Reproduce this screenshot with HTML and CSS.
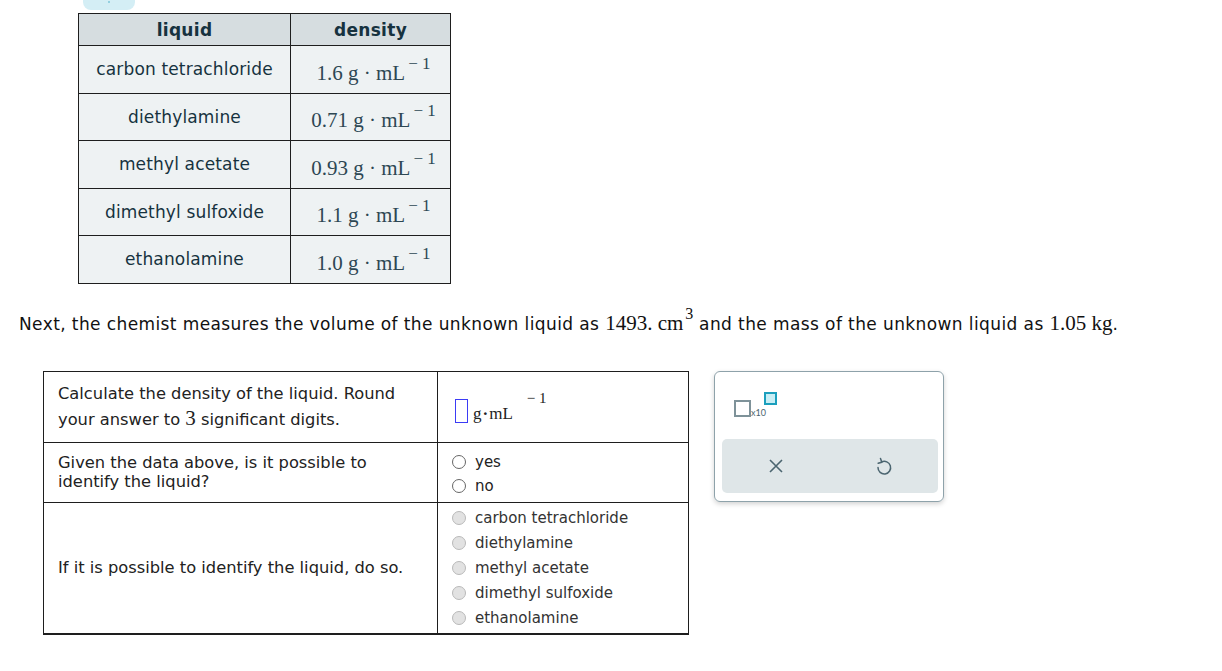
FILE: index.html
```html
<!DOCTYPE html>
<html>
<head>
<meta charset="utf-8">
<link rel="stylesheet" href="styles.css">
</head>
<body>
<div class="tab"><span class="tab-dot"></span></div>
<table class="data">
  <tr><th class="c1">liquid</th><th class="c2">density</th></tr>
  <tr><td>carbon tetrachloride</td><td class="m">1.6 g <span class="dot">·</span> mL<sup>− 1</sup></td></tr>
  <tr><td>diethylamine</td><td class="m">0.71 g <span class="dot">·</span> mL<sup>− 1</sup></td></tr>
  <tr><td>methyl acetate</td><td class="m">0.93 g <span class="dot">·</span> mL<sup>− 1</sup></td></tr>
  <tr><td>dimethyl sulfoxide</td><td class="m">1.1 g <span class="dot">·</span> mL<sup>− 1</sup></td></tr>
  <tr><td>ethanolamine</td><td class="m">1.0 g <span class="dot">·</span> mL<sup>− 1</sup></td></tr>
</table>
<p class="next">Next, the chemist measures the volume of the unknown liquid as <span class="math">1493. cm<sup>3</sup></span> and the mass of the unknown liquid as <span class="math">1.05 kg</span>.</p>
<div class="qrow">
  <table class="q">
    <tr class="r1">
      <td class="qt">Calculate the density of the liquid. Round your answer to <span class="num">3</span> significant digits.</td>
      <td class="qa"><span class="ans"><span class="box"></span><span class="unit">g<span class="udot">·</span>mL</span><sup class="usup">− 1</sup></span></td>
    </tr>
    <tr class="r2">
      <td class="qt">Given the data above, is it possible to identify the liquid?</td>
      <td class="qa">
        <div class="opt"><span class="radio"></span>yes</div>
        <div class="opt"><span class="radio"></span>no</div>
      </td>
    </tr>
    <tr class="r3">
      <td class="qt">If it is possible to identify the liquid, do so.</td>
      <td class="qa">
        <div class="opt2"><span class="radio dis"></span>carbon tetrachloride</div>
        <div class="opt2"><span class="radio dis"></span>diethylamine</div>
        <div class="opt2"><span class="radio dis"></span>methyl acetate</div>
        <div class="opt2"><span class="radio dis"></span>dimethyl sulfoxide</div>
        <div class="opt2"><span class="radio dis"></span>ethanolamine</div>
      </td>
    </tr>
  </table>
  <div class="panel">
    <div class="tools">
      <span class="sci"><span class="sq"></span><span class="x10">x10</span><span class="sq2"></span></span>
    </div>
    <div class="bar">
      <span class="cell"><svg width="16" height="16" viewBox="0 0 16 16"><path d="M2 2L14 14M14 2L2 14" stroke="#4b6570" stroke-width="1.6" fill="none"/></svg></span>
      <span class="cell"><svg width="18" height="20" viewBox="0 0 18 20"><path d="M6.5 6A6.3 6.3 0 1 1 3 11.5" stroke="#4b6570" stroke-width="1.5" fill="none" stroke-linecap="round"/><path d="M5.5 2.5L6.8 6.2L3.2 7.3" stroke="#4b6570" stroke-width="1.5" fill="none" stroke-linecap="round" stroke-linejoin="round"/></svg></span>
    </div>
  </div>
</div>
</body>
</html>
```

FILE: styles.css
```css
html, body {
  margin: 0;
  padding: 0;
  background: #fff;
}
body {
  font-family: "DejaVu Sans", Verdana, sans-serif;
  color: #222;
}
.tab {
  margin-left: 83px;
  width: 52px;
  height: 10px;
  background: #d4eef5;
  border-radius: 0 0 8px 8px;
  position: relative;
}
.tab-dot {
  position: absolute;
  left: 25px;
  top: 1px;
  width: 2px;
  height: 2px;
  background: #7fc6d8;
  border-radius: 50%;
}
.data {
  margin: 3px 0 0 78px;
  border-collapse: collapse;
  border: 1.5px solid #1e1e1e;
}
.data th, .data td {
  border: 1px solid #1e1e1e;
  text-align: center;
  padding: 0;
}
.data th {
  background: #d6dde0;
  color: #16323f;
  font-size: 17px;
  letter-spacing: 0.3px;
  font-weight: bold;
  height: 31px;
}
.data .c1 { width: 211px; }
.data .c2 { width: 159px; }
.data td {
  background: #eef2f3;
  color: #16323f;
  font-size: 17px;
  letter-spacing: 0.15px;
  height: 46.5px;
}
.data td.m {
  font-family: "Liberation Serif", "Times New Roman", serif;
  font-size: 21px;
  letter-spacing: 0;
  color: #2d4753;
  padding: 4px 0 0 6px;
  height: 42.5px;
}
.data td.m sup {
  font-size: 17px;
  position: relative;
  top: -3px;
  margin-left: 3px;
}
.next {
  margin: 24px 0 0 19px;
  font-size: 17px;
  letter-spacing: 0.4px;
  color: #111;
}
.math {
  font-family: "Liberation Serif", "Times New Roman", serif;
  font-size: 21px;
  letter-spacing: 0;
}
.math sup {
  font-size: 16px;
  margin-left: 2px;
  position: relative;
  top: -3px;
}
.qrow {
  display: flex;
  align-items: flex-start;
  margin: 35px 0 0 43px;
}
.q {
  border-collapse: collapse;
  table-layout: fixed;
  border: 1px solid #1e1e1e;
  border-bottom: 2px solid #1e1e1e;
  width: 645px;
}
.q td {
  border: 1px solid #1e1e1e;
  vertical-align: middle;
  padding: 0;
  box-sizing: border-box;
}
.q td.qt {
  width: 394px;
  padding: 0 22px 0 14px;
  font-size: 16.3px;
  color: #222;
}
.q td.qa {
  width: 251px;
  padding-left: 14px;
}
.r1 td { height: 71px; }
.r1 .qt { line-height: 26px; }
.r2 td { height: 60px; }
.r2 .qt { line-height: 19px; }
.r3 td { height: 132px; }
.num {
  font-family: "Liberation Serif", "Times New Roman", serif;
  font-size: 21px;
  line-height: 1;
}
.ans {
  display: flex;
  align-items: flex-end;
  margin-top: 10px;
}
.box {
  width: 11px;
  height: 22px;
  border: 1.5px solid #3b3bf5;
  margin-left: 3px;
  margin-bottom: 1px;
}
.unit {
  font-family: "Liberation Serif", "Times New Roman", serif;
  font-size: 17px;
  margin-left: 5px;
  color: #222;
  margin-bottom: 0;
}
.udot { margin: 0 1px; font-weight: bold; }
.usup {
  font-family: "Liberation Serif", "Times New Roman", serif;
  font-size: 15px;
  margin-left: 14px;
  align-self: flex-start;
  position: relative;
  top: -9px;
}
.opt, .opt2 {
  display: flex;
  align-items: center;
  font-size: 15px;
  color: #222;
}
.opt { height: 24px; }
.r2 .qa { padding-top: 3px; }
.opt2 { height: 25px; color: #333; }
.radio {
  width: 12px;
  height: 12px;
  border: 1.3px solid #666;
  border-radius: 50%;
  margin-right: 9px;
  flex: none;
}
.radio.dis {
  background: #e2e2e2;
  border-color: #b9b9b9;
}
.panel {
  margin-left: 25px;
  width: 230px;
  height: 131px;
  border: 1px solid #8ea2aa;
  border-radius: 6px;
  box-shadow: 0 2px 5px rgba(0,0,0,0.18);
  padding: 0 5px 0 7px;
  box-sizing: border-box;
  display: flex;
  flex-direction: column;
}
.tools {
  height: 67px;
  position: relative;
  flex: none;
}
.sci {
  position: absolute;
  left: 12px;
  top: 20px;
  width: 50px;
  height: 26px;
}
.sq {
  position: absolute;
  left: 0;
  top: 8px;
  width: 13px;
  height: 13px;
  border: 2px solid #7e9299;
}
.x10 {
  position: absolute;
  left: 17px;
  top: 15px;
  font-family: Lato, "Open Sans", sans-serif;
  font-size: 9px;
  color: #4b6570;
}
.sq2 {
  position: absolute;
  left: 30px;
  top: 0;
  width: 9px;
  height: 9px;
  background: #c8eef5;
  border: 2px solid #1b9fbd;
}
.bar {
  height: 54px;
  flex: none;
  background: #dfe6e8;
  border-radius: 5px;
  display: flex;
  align-items: center;
}
.cell {
  flex: 1;
  display: flex;
  justify-content: center;
  align-items: center;
}
.cell svg { display: block; }
```
